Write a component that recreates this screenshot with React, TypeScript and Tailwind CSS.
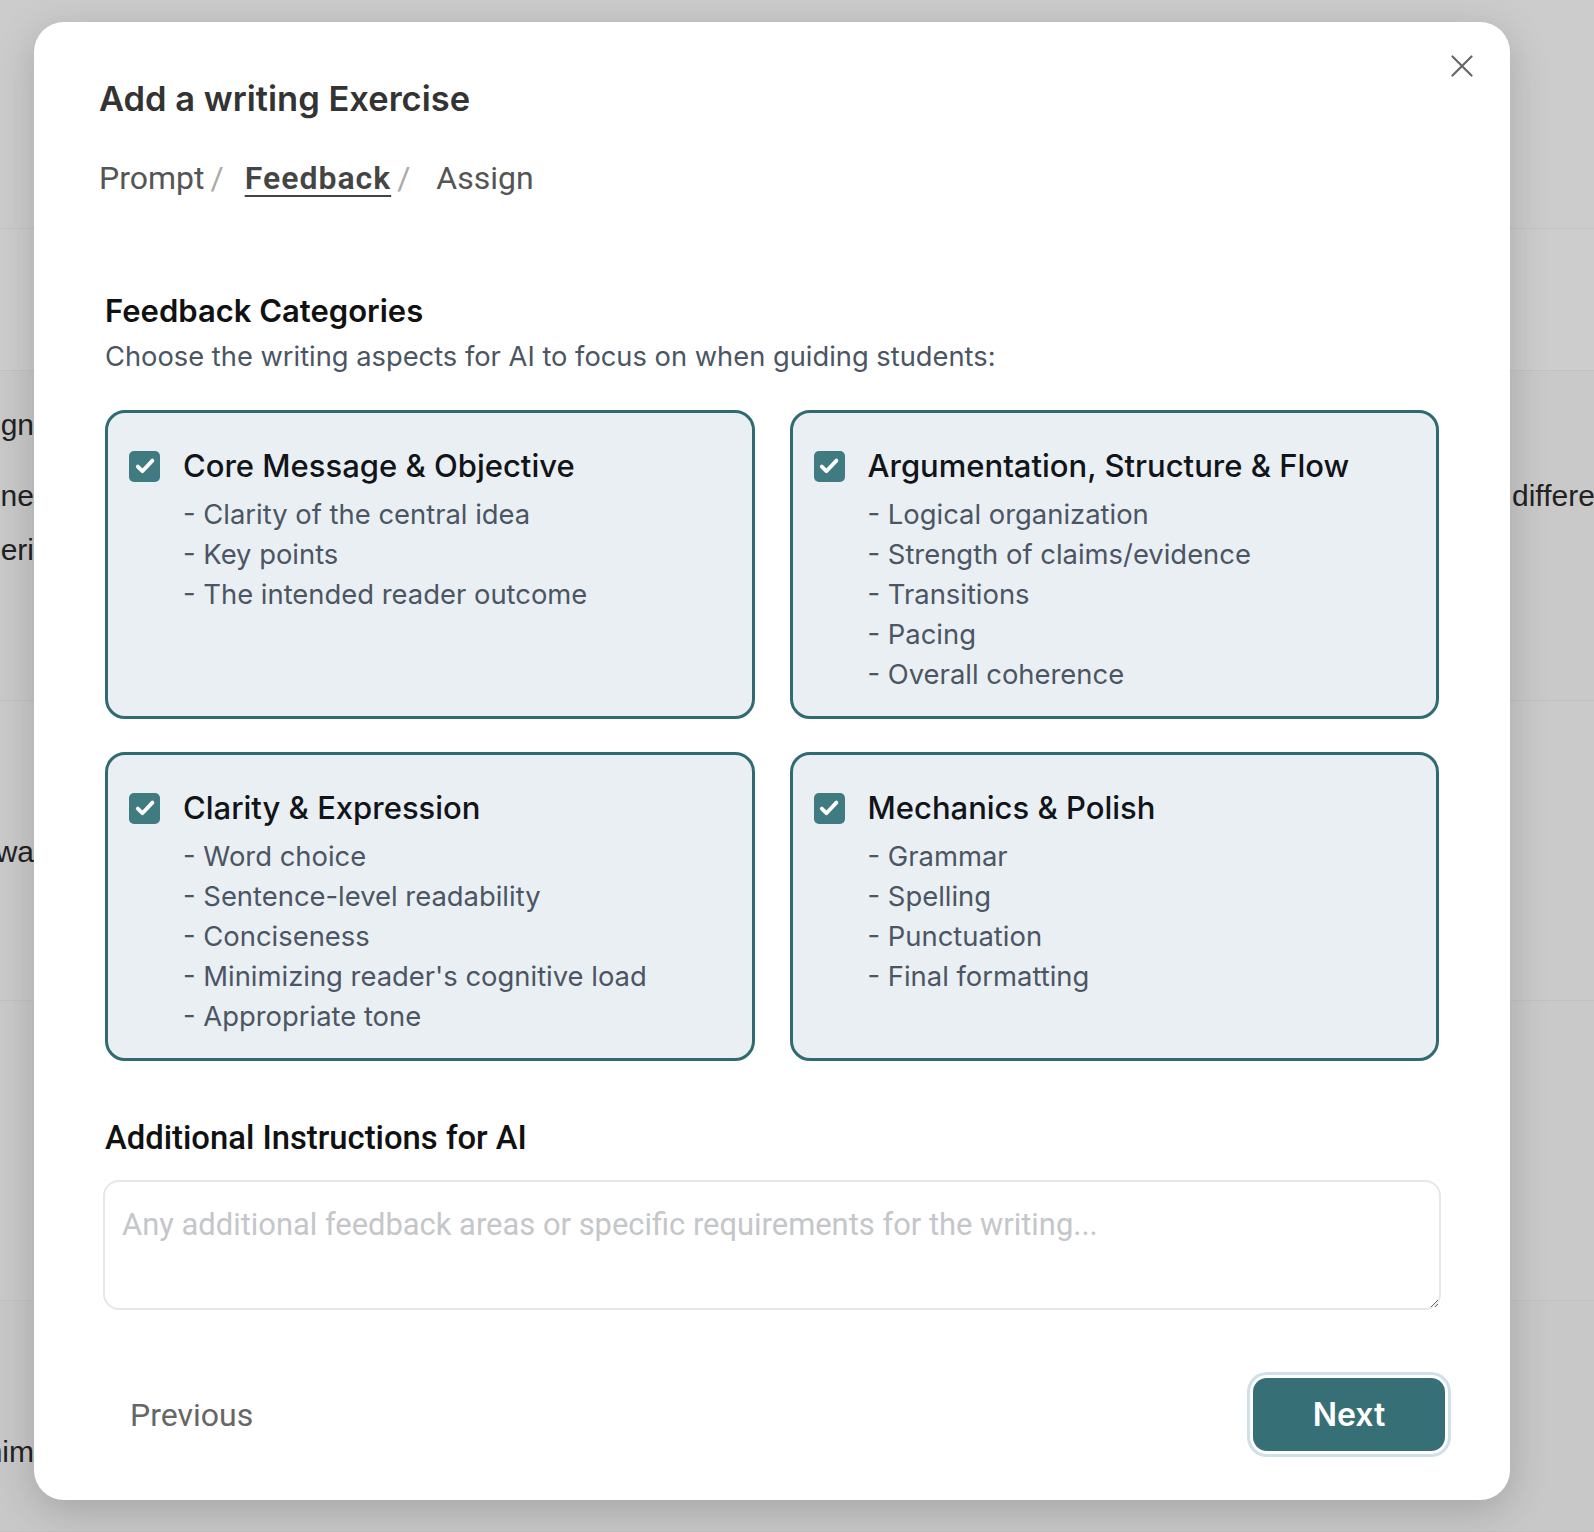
import React from "react";

type Category = {
  title: string;
  items: string[];
};

const categories: Category[] = [
  {
    title: "Core Message & Objective",
    items: ["Clarity of the central idea", "Key points", "The intended reader outcome"],
  },
  {
    title: "Argumentation, Structure & Flow",
    items: [
      "Logical organization",
      "Strength of claims/evidence",
      "Transitions",
      "Pacing",
      "Overall coherence",
    ],
  },
  {
    title: "Clarity & Expression",
    items: [
      "Word choice",
      "Sentence-level readability",
      "Conciseness",
      "Minimizing reader's cognitive load",
      "Appropriate tone",
    ],
  },
  {
    title: "Mechanics & Polish",
    items: ["Grammar", "Spelling", "Punctuation", "Final formatting"],
  },
];

type Frag = { t: string; mt: string };

// rows of the page behind the overlay
const pageRows: { h: string; bg: string; left: Frag[]; right: Frag[] }[] = [
  { h: "h-[229px]", bg: "bg-[#cccccc]", left: [], right: [] },
  { h: "h-[142px]", bg: "bg-[#cdcdcd]", left: [], right: [] },
  {
    h: "h-[330px]",
    bg: "bg-[#c9c9c9]",
    left: [
      { t: "Assign", mt: "mt-[36px]" },
      { t: "one", mt: "mt-[35px]" },
      { t: "experi", mt: "mt-[18px]" },
    ],
    right: [{ t: "different", mt: "mt-[107px]" }],
  },
  { h: "h-[300px]", bg: "bg-[#cacaca]", left: [{ t: "wa", mt: "mt-[133px]" }], right: [] },
  { h: "h-[300px]", bg: "bg-[#c9c9c9]", left: [], right: [] },
  { h: "flex-1", bg: "bg-[#c8c8c8]", left: [{ t: "him", mt: "mt-[133px]" }], right: [] },
];

const CheckBox: React.FC = () => (
  <div className="w-[31px] h-[31px] shrink-0 rounded-[5px] bg-[#3f7b81] flex items-center justify-center">
    <svg width="24" height="24" viewBox="0 0 24 24" fill="none">
      <path
        d="M4.8 12.6l4.6 4.6L19.4 6.6"
        stroke="white"
        strokeWidth="3.8"
        strokeLinecap="round"
        strokeLinejoin="round"
      />
    </svg>
  </div>
);

const CategoryCard: React.FC<{ category: Category }> = ({ category }) => (
  <div className="rounded-[20px] border-[3px] border-[#2f6b71] bg-[#e9eff3] pl-[21px] pr-4 pt-[33px] pb-[22px]">
    <div className="flex items-center gap-[23px]">
      <CheckBox />
      <div className="text-[31px] leading-[40px] font-medium text-[#111418]">
        {category.title}
      </div>
    </div>
    <ul className="mt-2 pl-[54px]">
      {category.items.map((item) => (
        <li key={item} className="text-[27.4px] leading-[40px] text-[#4b5563]">
          - {item}
        </li>
      ))}
    </ul>
  </div>
);

export default function App() {
  return (
    <div className="relative w-[1594px] h-[1532px] overflow-hidden bg-[#cccccc] font-['Inter',sans-serif]">
      {/* page behind the modal */}
      <div className="flex flex-col h-full font-['Liberation_Sans',Arial,sans-serif] text-[30px] text-[#222222]">
        {pageRows.map((row, i) => (
          <div key={i} className={`${row.h} ${row.bg} flex border-b border-[#c2c2c2]`}>
            <div className="w-[34px] overflow-hidden flex flex-col items-end">
              {row.left.map((f) => (
                <div key={f.t} className={`${f.mt} whitespace-nowrap leading-[36px]`}>
                  {f.t}
                </div>
              ))}
            </div>
            <div className="flex-1" />
            <div className="w-[82px] overflow-hidden">
              {row.right.map((f) => (
                <div key={f.t} className={`${f.mt} whitespace-nowrap leading-[36px]`}>
                  {f.t}
                </div>
              ))}
            </div>
          </div>
        ))}
      </div>

      {/* modal */}
      <div className="absolute left-[34px] top-[22px] w-[1476px] h-[1478px] rounded-[30px] bg-white shadow-[0_10px_40px_rgba(0,0,0,0.18)] px-[65px] pt-[55px]">
        <button className="absolute right-[28px] top-[24px] w-[40px] h-[40px] flex items-center justify-center text-[#666666]">
          <svg width="22" height="22" viewBox="0 0 22 22" fill="none">
            <path d="M1.5 1.5l19 19M20.5 1.5l-19 19" stroke="currentColor" strokeWidth="2.2" strokeLinecap="round" />
          </svg>
        </button>

        <h2 className="text-[34.5px] leading-[44px] font-semibold text-[#333333]">
          Add a writing Exercise
        </h2>

        <nav className="mt-[37px] flex items-center text-[32px] leading-[40px] font-['Roboto',sans-serif] text-[#555555]">
          <span>Prompt</span>
          <span className="ml-[6px] text-[#aaaaaa]">/</span>
          <span className="ml-[21px] font-semibold tracking-[1px] text-[#444444] underline decoration-2 underline-offset-[6px]">
            Feedback
          </span>
          <span className="ml-[6px] text-[#aaaaaa]">/</span>
          <span className="ml-[26px]">Assign</span>
        </nav>

        <section className="mt-[93px] px-[6px]">
          <h3 className="text-[31px] leading-[40px] font-semibold text-[#111111]">
            Feedback Categories
          </h3>
          <p className="mt-[8px] text-[27.3px] leading-[36px] text-[#4b5563]">
            Choose the writing aspects for AI to focus on when guiding students:
          </p>

          <div className="mt-[35px] grid grid-cols-2 gap-x-[35px] gap-y-[33px]">
            {categories.map((c) => (
              <CategoryCard key={c.title} category={c} />
            ))}
          </div>
        </section>

        <section className="mt-[57px] px-[4px]">
          <h3 className="px-[2px] text-[32.8px] leading-[40px] font-medium font-['Roboto',sans-serif] text-[#111111]">
            Additional Instructions for AI
          </h3>
          <textarea
            className="mt-[22px] block w-full h-[130px] rounded-[16px] border-2 border-[#e6e7e9] px-[17px] pt-[23px] pb-[10px] text-[30.9px] leading-[40px] font-['Roboto',sans-serif] text-[#333333] placeholder:text-[#c4c6ca] outline-none"
            placeholder="Any additional feedback areas or specific requirements for the writing..."
          />
        </section>

        <div className="mt-[68px] flex items-center justify-between">
          <button className="ml-[31px] text-[32px] leading-[40px] font-['Roboto',sans-serif] text-[#666666]">
            Previous
          </button>
          <button className="w-[192px] h-[73px] rounded-[14px] bg-[#366f76] text-white text-[32px] font-semibold ring-[3px] ring-[#cfe0ea] ring-offset-[3px] ring-offset-white">
            Next
          </button>
        </div>
      </div>
    </div>
  );
}
